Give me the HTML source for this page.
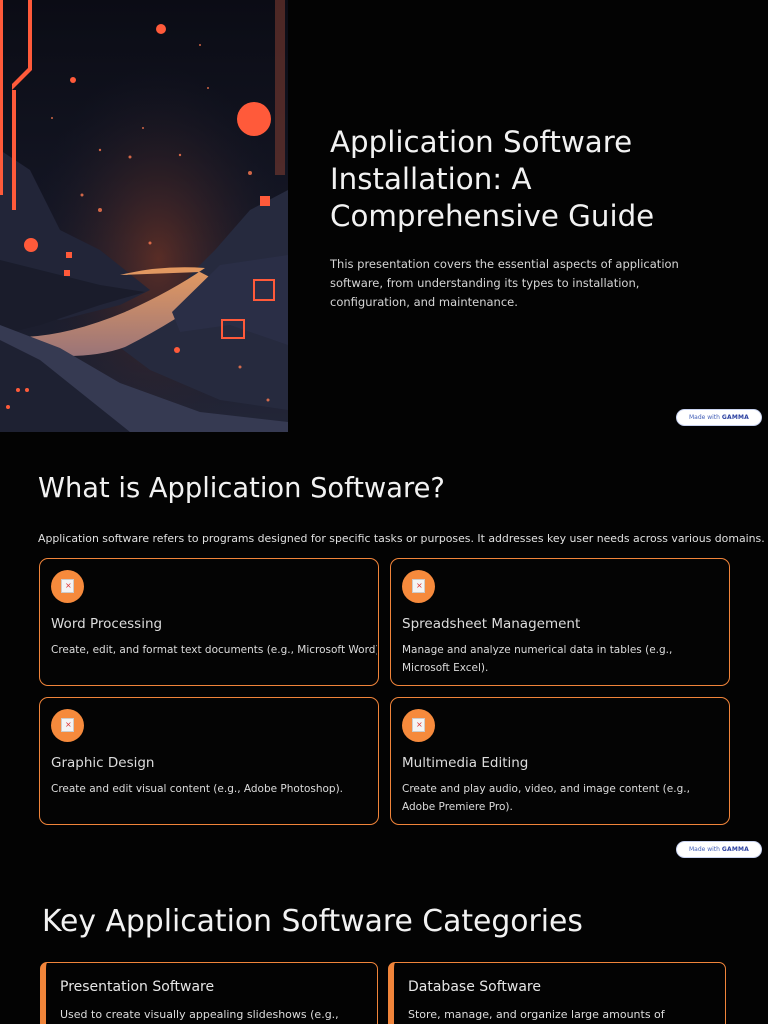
<!DOCTYPE html>
<html><head><meta charset="utf-8"><style>
*{margin:0;padding:0;box-sizing:border-box}
html,body{width:768px;height:1024px;overflow:hidden}
body{background:#030303;font-family:"DejaVu Sans","Liberation Sans",sans-serif;color:#eee;position:relative}
.a{position:absolute}
.badge{position:absolute;left:676px;width:86px;height:17px;background:#fff;border-radius:9px;border:1px solid #c9d3f0;font-size:6px;color:#4460b8;text-align:center;line-height:15px}
.badge b{font-weight:900;letter-spacing:.2px;color:#2a3fa0}
.card{position:absolute;width:340px;height:128px;border:1.5px solid #f0843a;border-radius:9px;background:#040404}
.ic{position:absolute;left:11px;top:11px;width:33px;height:33px;border-radius:50%;background:#f68a3c}
.ic i{position:absolute;left:10px;top:9px;width:13px;height:14px;background:#f4f4f4;border:1px solid #ccc}
.ic i:after{content:"×";position:absolute;left:3px;top:1px;font-size:8px;color:#d33;font-style:normal}
.ct{position:absolute;left:11px;top:57px;font-size:13.5px;color:#ddd;white-space:nowrap}
.cd{position:absolute;left:11px;top:82px;font-size:10.5px;color:#ddd;line-height:18px;width:320px}
.k{position:absolute;width:338px;height:80px;border:1.5px solid #f0843a;border-left:6px solid #f0843a;border-radius:7px;top:962px}
.k .t{position:absolute;left:14px;top:16px;font-size:14px;color:#e6e6e6}
.k .d{position:absolute;left:14px;top:45px;font-size:11px;color:#ddd}
</style></head><body>
<svg class="a" style="left:0;top:0" width="288" height="432" viewBox="0 0 288 432">
<defs>
<linearGradient id="sky" x1="0" y1="0" x2="0" y2="1"><stop offset="0" stop-color="#0b0c15"/><stop offset=".5" stop-color="#141624"/><stop offset="1" stop-color="#232638"/></linearGradient>
<linearGradient id="riv" x1="0" y1="0" x2="0" y2="1"><stop offset="0" stop-color="#e59a60"/><stop offset="1" stop-color="#9a7478"/></linearGradient>
<radialGradient id="glow" cx=".55" cy=".6" r=".45"><stop offset="0" stop-color="#6a3226" stop-opacity=".8"/><stop offset="1" stop-color="#1a1c2c" stop-opacity="0"/></radialGradient>
</defs>
<rect width="288" height="432" fill="url(#sky)"/>
<rect width="288" height="432" fill="url(#glow)"/>
<path d="M0 150 L30 170 L60 230 L100 250 L150 290 L120 305 L60 320 L0 310Z" fill="#222538"/>
<path d="M288 190 L250 210 L215 250 L190 275 L170 300 L110 340 L150 370 L220 400 L288 410Z" fill="#262a3e"/>
<path d="M0 260 L40 270 L100 285 L145 292 L100 305 L40 325 L0 335Z" fill="#1a1c2b"/>
<path d="M120 275 Q160 265 205 268 Q170 292 125 312 Q70 335 25 337 L15 352 Q85 362 125 347 Q175 322 225 285 L200 272Z" fill="url(#riv)"/>
<path d="M0 325 L60 348 L120 383 L200 412 L288 422 L288 432 L0 432Z" fill="#363a52"/>
<path d="M0 340 L40 360 L90 400 L130 432 L0 432Z" fill="#1e2132"/>
<path d="M220 265 L288 255 L288 345 L230 325 L180 332 L172 312Z" fill="#2a2e46"/>
<g fill="#ff5a3a">
<circle cx="254" cy="119" r="17"/><circle cx="161" cy="29" r="5"/><circle cx="31" cy="245" r="7"/>
<circle cx="73" cy="80" r="3"/><circle cx="177" cy="350" r="3"/><circle cx="8" cy="407" r="2"/><circle cx="18" cy="390" r="2"/><circle cx="27" cy="390" r="2"/>
<rect x="0" y="0" width="3" height="195"/><rect x="12" y="90" width="4" height="120"/><path d="M12 90 L32 70 L32 0 L28 0 L28 68 L12 84Z"/>
<rect x="254" y="280" width="20" height="20" fill="none" stroke="#ff5a3a" stroke-width="2"/>
<rect x="222" y="320" width="22" height="18" fill="none" stroke="#ff5a3a" stroke-width="2"/>
<rect x="260" y="196" width="10" height="10"/><rect x="64" y="270" width="6" height="6"/><rect x="66" y="252" width="6" height="6"/>
</g>
<g fill="#ff7a50" opacity=".8">
<circle cx="100" cy="150" r="1.2"/><circle cx="130" cy="157" r="1.5"/><circle cx="180" cy="155" r="1.2"/><circle cx="200" cy="45" r="1"/><circle cx="208" cy="88" r="1"/><circle cx="52" cy="118" r="1"/><circle cx="143" cy="128" r="1"/><circle cx="250" cy="173" r="2"/><circle cx="100" cy="210" r="2"/><circle cx="82" cy="195" r="1.5"/><circle cx="150" cy="243" r="1.5"/><circle cx="240" cy="367" r="1.5"/><circle cx="268" cy="400" r="1.5"/>
</g>
<rect x="275" y="0" width="10" height="175" fill="#7a3a30" opacity=".6"/>
</svg>
<div class="a" style="left:330px;top:124px;font-size:29.3px;line-height:37px;color:#f2f2f2;width:420px">Application Software Installation: A Comprehensive Guide</div>
<div class="a" style="left:330px;top:255px;font-size:11.5px;line-height:19px;color:#d6d6d6;width:380px">This presentation covers the essential aspects of application software, from understanding its types to installation, configuration, and maintenance.</div>
<div class="badge" style="top:409px">Made with <b>GAMMA</b></div>

<div class="a" style="left:38px;top:473px;font-size:27.3px;color:#f2f2f2">What is Application Software?</div>
<div class="a" style="left:38px;top:532px;font-size:10.9px;color:#e0e0e0;white-space:nowrap">Application software refers to programs designed for specific tasks or purposes. It addresses key user needs across various domains.</div>

<div class="card" style="left:39px;top:558px"><div class="ic"><i></i></div><div class="ct">Word Processing</div><div class="cd" style="white-space:nowrap;overflow:hidden;width:326px">Create, edit, and format text documents (e.g., Microsoft Word).</div></div>
<div class="card" style="left:390px;top:558px"><div class="ic"><i></i></div><div class="ct">Spreadsheet Management</div><div class="cd">Manage and analyze numerical data in tables (e.g., Microsoft Excel).</div></div>
<div class="card" style="left:39px;top:697px"><div class="ic"><i></i></div><div class="ct">Graphic Design</div><div class="cd">Create and edit visual content (e.g., Adobe Photoshop).</div></div>
<div class="card" style="left:390px;top:697px"><div class="ic"><i></i></div><div class="ct">Multimedia Editing</div><div class="cd">Create and play audio, video, and image content (e.g., Adobe Premiere Pro).</div></div>
<div class="badge" style="top:841px">Made with <b>GAMMA</b></div>

<div class="a" style="left:42px;top:904px;font-size:29.8px;color:#f2f2f2">Key Application Software Categories</div>
<div class="k" style="left:40px"><div class="t">Presentation Software</div><div class="d">Used to create visually appealing slideshows (e.g.,</div></div>
<div class="k" style="left:388px"><div class="t">Database Software</div><div class="d">Store, manage, and organize large amounts of</div></div>
</body></html>
